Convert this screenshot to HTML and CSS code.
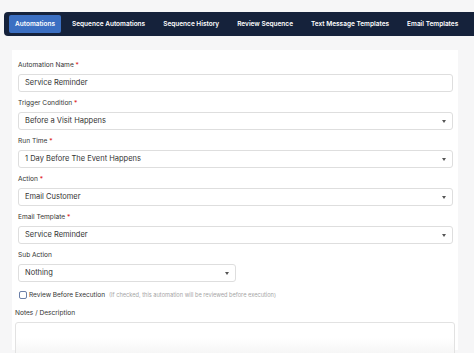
FILE: index.html
```html
<!DOCTYPE html>
<html>
<head>
<meta charset="utf-8">
<link rel="stylesheet" href="styles.css">
</head>
<body>
<nav class="tabs">
  <span class="tab active">Automations</span>
  <span class="tab">Sequence Automations</span>
  <span class="tab">Sequence History</span>
  <span class="tab">Review Sequence</span>
  <span class="tab">Text Message Templates</span>
  <span class="tab">Email Templates</span>
</nav>
<main class="card">
  <div class="field">
    <label class="label">Automation Name <span class="req">*</span></label>
    <div class="input">Service Reminder</div>
  </div>
  <div class="field">
    <label class="label">Trigger Condition <span class="req">*</span></label>
    <div class="input select">Before a Visit Happens<svg class="caret" viewBox="0 0 4 3" width="4" height="3"><path d="M0 0H4L2 3Z"/></svg></div>
  </div>
  <div class="field">
    <label class="label">Run Time <span class="req">*</span></label>
    <div class="input select">1 Day Before The Event Happens<svg class="caret" viewBox="0 0 4 3" width="4" height="3"><path d="M0 0H4L2 3Z"/></svg></div>
  </div>
  <div class="field">
    <label class="label">Action <span class="req">*</span></label>
    <div class="input select">Email Customer<svg class="caret" viewBox="0 0 4 3" width="4" height="3"><path d="M0 0H4L2 3Z"/></svg></div>
  </div>
  <div class="field">
    <label class="label">Email Template <span class="req">*</span></label>
    <div class="input select">Service Reminder<svg class="caret" viewBox="0 0 4 3" width="4" height="3"><path d="M0 0H4L2 3Z"/></svg></div>
  </div>
  <div class="field">
    <label class="label">Sub Action</label>
    <div class="input select narrow">Nothing<svg class="caret" viewBox="0 0 4 3" width="4" height="3"><path d="M0 0H4L2 3Z"/></svg></div>
  </div>
  <div class="check-row">
    <span class="checkbox"></span>
    <span class="check-label">Review Before Execution</span>
    <span class="hint">(If checked, this automation will be reviewed before execution)</span>
  </div>
  <div class="notes">
    <label class="label">Notes / Description</label>
    <div class="textarea"></div>
  </div>
</main>
</body>
</html>
```
FILE: styles.css
```css
* { box-sizing: border-box; }
html, body { margin: 0; padding: 0; }
body {
  background: #f6f6f7;
  font-family: Inter, "Noto Sans", sans-serif;
  color: #2b2b2b;
  padding-top: 12px;
  height: 353px;
  overflow: hidden;
}
.tabs {
  margin-left: 4px;
  height: 24px;
  background: #15223b;
  border-radius: 4px 0 0 4px;
  display: flex;
  align-items: center;
  padding-left: 5px;
  white-space: nowrap;
  overflow: hidden;
}
.tab {
  color: #fff;
  font-size: 6.5px;
  font-weight: 600;
  height: 18px;
  line-height: 18px;
  padding: 0 9px;
  border-radius: 2px;
  flex: none;
}
.tab.active { background: #3b6fc2; padding: 0 6px; margin-right: 2px; }
.card {
  margin: 14px 0 0 12px;
  width: 446px;
  background: #fff;
  padding: 10px 5px 0 6px;
  height: 300px;
}
.field { margin-bottom: 6px; }
.label {
  display: block;
  font-size: 6.6px;
  line-height: 10px;
  color: #333;
  margin-bottom: 4px;
}
.req { color: #d22; }
.input {
  height: 18px;
  border: 1px solid #dedede;
  border-radius: 3px;
  font-size: 7.5px;
  line-height: 16px;
  padding: 0 6px;
  color: #333;
  display: flex;
  align-items: center;
  justify-content: space-between;
}
.narrow { width: 218px; }
.caret { fill: #555; flex: none; }
.check-row {
  display: flex;
  align-items: center;
  margin: 7px 0 0 1px;
  height: 12px;
}
.checkbox {
  width: 8px;
  height: 8px;
  border: 1px solid #6b7fa8;
  border-radius: 2px;
  margin-right: 2px;
}
.check-label { font-size: 6.5px; color: #333; }
.hint { font-size: 5.65px; color: #a5a5a5; margin-left: 4px; }
.notes { margin: 7px 0 0 -3px; }
.textarea {
  height: 40px;
  margin-top: 1px;
  border: 1px solid #e2e2e2;
  border-radius: 3px;
  margin-right: -2px;
  background: linear-gradient(#fff 40%, #f1f1f1);
}
```
